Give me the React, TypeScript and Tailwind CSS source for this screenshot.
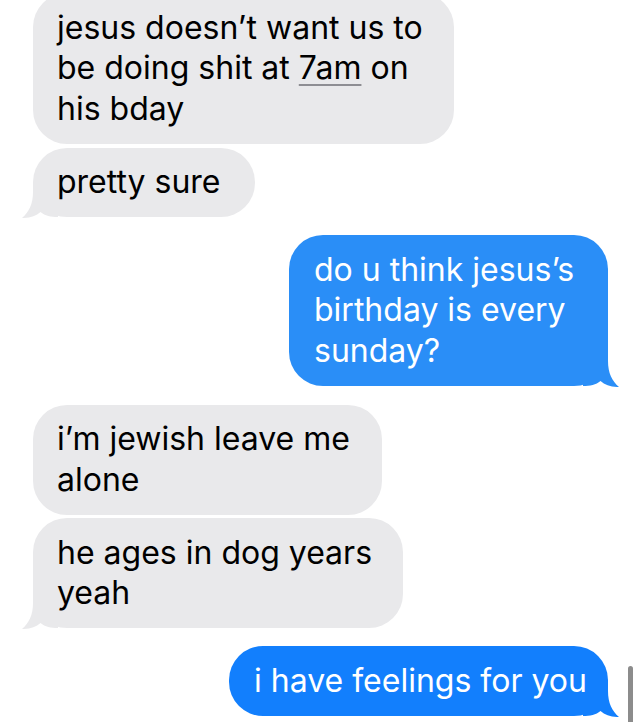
import React from "react";

type Msg = { side: "in" | "out"; w: number; lines: React.ReactNode[]; color?: string; mt: number; tail: boolean };

const GRAY = "#e9e9eb";

function Tail({ side, color }: { side: "in" | "out"; color: string }) {
  return (
    <svg
      width="36"
      height="36"
      viewBox="0 0 36 36"
      className={
        side === "in"
          ? "absolute left-[-11px] bottom-[-1px]"
          : "absolute right-[-11px] bottom-[-1px] -scale-x-100"
      }
    >
      <path
        d="M11,0 L11,10 C11,22 7,30 0,36 C8,36.2 14,34 18.5,30 C23,34 29,35 36,35 L36,0 Z"
        fill={color}
      />
    </svg>
  );
}

const msgs: Msg[] = [
  {
    side: "in",
    w: 421,
    mt: -7,
    tail: false,
    lines: [
      "jesus doesn’t want us to",
      <>
        be doing shit at{" "}
        <span className="underline decoration-[#8e8e93] decoration-[1.5px] underline-offset-[5px]">7am</span> on
      </>,
      "his bday",
    ],
  },
  { side: "in", w: 222, mt: 4, tail: true, lines: ["pretty sure"] },
  {
    side: "out",
    w: 319,
    mt: 18,
    tail: true,
    color: "#2a8ef7",
    lines: ["do u think jesus’s", "birthday is every", "sunday?"],
  },
  { side: "in", w: 349, mt: 19, tail: false, lines: ["i’m jewish leave me", "alone"] },
  { side: "in", w: 370, mt: 3.5, tail: true, lines: ["he ages in dog years", "yeah"] },
  { side: "out", w: 379, mt: 18, tail: true, color: "#127ffd", lines: ["i have feelings for you"] },
];

export default function App() {
  return (
    <div
      className="relative h-[722px] w-[640px] overflow-hidden bg-white"
      style={{ fontFamily: "Inter, 'Noto Sans', sans-serif" }}
    >
      <div className="flex flex-col">
        {msgs.map((m, i) => {
          const color = m.side === "in" ? GRAY : m.color!;
          return (
            <div
              key={i}
              className={m.side === "in" ? "flex justify-start pl-[33px]" : "flex justify-end pr-[32px]"}
              style={{ marginTop: m.mt }}
            >
              <div
                className={
                  "relative rounded-[34px] px-[24px] py-[14.5px] text-[32px] leading-[40.5px] " +
                  (m.side === "in" ? "text-black" : "text-white pl-[25px]")
                }
                style={{ width: m.w, background: color }}
              >
                {m.tail && <Tail side={m.side} color={color} />}
                <div className="relative whitespace-nowrap">
                  {m.lines.map((l, j) => (
                    <div key={j}>{l}</div>
                  ))}
                </div>
              </div>
            </div>
          );
        })}
      </div>
      <div className="absolute left-[628px] top-[666px] h-[60px] w-[5px] rounded-full bg-[#8c8c8c]" />
    </div>
  );
}
